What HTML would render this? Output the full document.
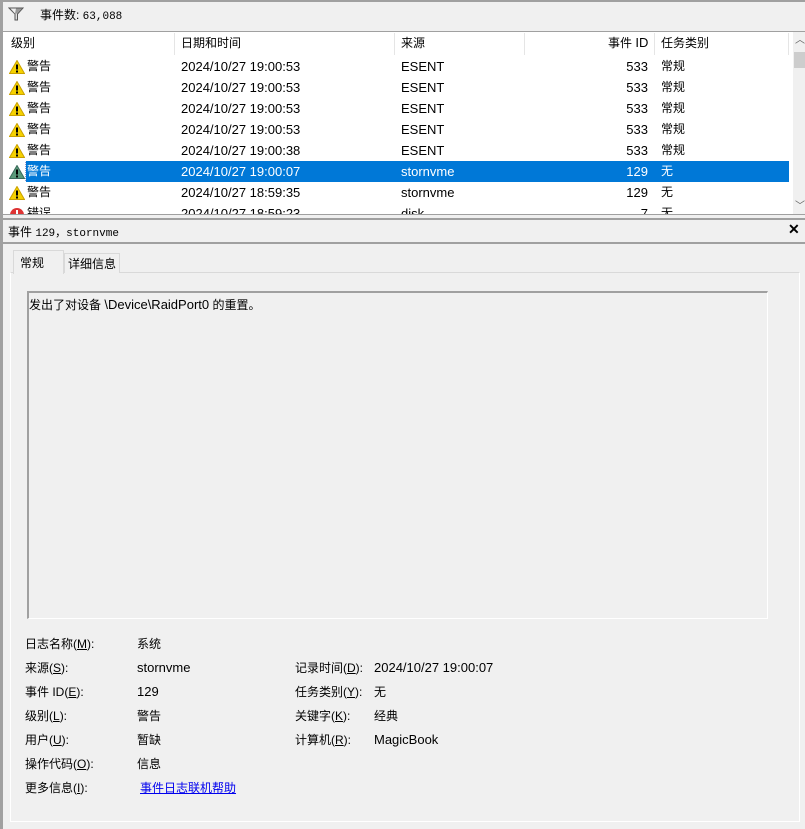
<!DOCTYPE html>
<html><head><meta charset="utf-8"><style>
*{margin:0;padding:0;box-sizing:border-box}
body{width:805px;height:829px;background:#f0f0f0;font-family:"Liberation Sans","Noto Sans CJK SC",sans-serif;font-size:12px;color:#000;position:relative;overflow:hidden}
.a{position:absolute;white-space:nowrap;line-height:16px}
.l{font-size:13px}
.mono{font-family:"Liberation Mono","Noto Sans CJK SC",monospace;font-size:11px}
.row{position:absolute;left:4px;width:785px;height:21px;line-height:21px;overflow:hidden}
.row span{position:absolute}
.sel{background:#0078d7;color:#fff}
.w{left:5px;top:4px;width:16px;height:14px}
u{text-decoration:underline}
</style></head><body>
<div class="a" style="left:0;top:0;width:805px;height:2px;background:#a0a0a0"></div>
<div class="a" style="left:0;top:0;width:3px;height:829px;background:#a0a0a0"></div>
<svg class="a" style="left:8px;top:6px" width="16" height="16" viewBox="0 0 16 16"><path d="M1 2H15L9.5 8V14H7V8Z" fill="#ddd" stroke="#555" stroke-width="1"/><path d="M2.5 2.5H14L9 7.5H7Z" fill="#999"/><path d="M2.5 2.5H8L7 7.5Z" fill="#eee"/></svg>
<div class="a" style="left:40px;top:7px;font-size:12px">事件数: <span class="mono">63,088</span></div>
<div class="a" style="left:3px;top:31px;width:802px;height:184px;background:#fff;border-top:1px solid #a0a0a0"></div>
<div class="a" style="left:174px;top:33px;width:1px;height:22px;background:#e5e5e5"></div>
<div class="a" style="left:394px;top:33px;width:1px;height:22px;background:#e5e5e5"></div>
<div class="a" style="left:524px;top:33px;width:1px;height:22px;background:#e5e5e5"></div>
<div class="a" style="left:654px;top:33px;width:1px;height:22px;background:#e5e5e5"></div>
<div class="a" style="left:788px;top:33px;width:1px;height:22px;background:#e5e5e5"></div>
<div class="a" style="left:11px;top:35px">级别</div>
<div class="a" style="left:181px;top:35px">日期和时间</div>
<div class="a" style="left:401px;top:35px">来源</div>
<div class="a" style="left:608px;top:35px">事件 <span class="l">ID</span></div>
<div class="a" style="left:661px;top:35px">任务类别</div>
<div class="a" style="left:793px;top:32px;width:12px;height:182px;background:#f0f0f0"></div>
<div class="a" style="left:794px;top:52px;width:11px;height:16px;background:#cdcdcd"></div>
<div class="a" style="left:795px;top:33px;font-size:10px;color:#606060">︿</div>
<div class="a" style="left:795px;top:199px;font-size:10px;color:#606060">﹀</div>
<div id="rows"></div>
<div class="a" style="left:3px;top:214px;width:802px;height:1px;background:#a0a0a0"></div>
<div class="a" style="left:3px;top:218px;width:802px;height:2px;background:#a0a0a0"></div>
<div class="a" style="left:8px;top:224px">事件 <span class="mono">129，stornvme</span></div>
<div class="a" style="left:788px;top:221px;font-size:14px;font-weight:bold">✕</div>
<div class="a" style="left:3px;top:242px;width:802px;height:2px;background:#a0a0a0"></div>
<div class="a" style="left:10px;top:272px;width:790px;height:550px;border:1px solid #fff;border-top:1px solid #d9d9d9"></div>
<div class="a" style="left:13px;top:250px;width:51px;height:24px;background:#f0f0f0;border:1px solid #d9d9d9;border-bottom:none;padding:4px 6px">常规</div>
<div class="a" style="left:64px;top:253px;width:56px;height:20px;background:#f0f0f0;border:1px solid #d9d9d9;border-bottom:none;padding:2px 3px">详细信息</div>
<div class="a" style="left:27px;top:291px;width:741px;height:328px;border-top:2px solid #a0a0a0;border-left:2px solid #a0a0a0;border-right:1px solid #fff;border-bottom:1px solid #fff"></div>
<div class="a" style="left:29px;top:297px">发出了对设备 <span class="l">\Device\RaidPort0</span> 的重置。</div>
<div class="a" style="left:25px;top:636px">日志名称(<u>M</u>):</div><div class="a" style="left:137px;top:636px">系统</div>
<div class="a" style="left:25px;top:660px">来源(<u>S</u>):</div><div class="a l" style="left:137px;top:660px">stornvme</div>
<div class="a" style="left:295px;top:660px">记录时间(<u>D</u>):</div><div class="a l" style="left:374px;top:660px">2024/10/27 19:00:07</div>
<div class="a" style="left:25px;top:684px">事件 ID(<u>E</u>):</div><div class="a l" style="left:137px;top:684px">129</div>
<div class="a" style="left:295px;top:684px">任务类别(<u>Y</u>):</div><div class="a" style="left:374px;top:684px">无</div>
<div class="a" style="left:25px;top:708px">级别(<u>L</u>):</div><div class="a" style="left:137px;top:708px">警告</div>
<div class="a" style="left:295px;top:708px">关键字(<u>K</u>):</div><div class="a" style="left:374px;top:708px">经典</div>
<div class="a" style="left:25px;top:732px">用户(<u>U</u>):</div><div class="a" style="left:137px;top:732px">暂缺</div>
<div class="a" style="left:295px;top:732px">计算机(<u>R</u>):</div><div class="a l" style="left:374px;top:732px">MagicBook</div>
<div class="a" style="left:25px;top:756px">操作代码(<u>O</u>):</div><div class="a" style="left:137px;top:756px">信息</div>
<div class="a" style="left:25px;top:780px">更多信息(<u>I</u>):</div><div class="a" style="left:140px;top:780px;color:#0000ee;text-decoration:underline">事件日志联机帮助</div>
<script>
var d=[["警告","2024/10/27 19:00:53","ESENT","533","常规"],["警告","2024/10/27 19:00:53","ESENT","533","常规"],["警告","2024/10/27 19:00:53","ESENT","533","常规"],["警告","2024/10/27 19:00:53","ESENT","533","常规"],["警告","2024/10/27 19:00:38","ESENT","533","常规"],["警告","2024/10/27 19:00:07","stornvme","129","无"],["警告","2024/10/27 18:59:35","stornvme","129","无"],["错误","2024/10/27 18:59:23","disk","7","无"]];
var h="";d.forEach(function(r,i){var t=56+i*21;var sel=i==5;var c=sel?'color:#fff;':'';
var ic=r[0]=="错误"?'<svg class="a w" viewBox="0 0 16 14"><circle cx="8" cy="8" r="7" fill="#d33"/><rect x="7" y="3" width="2" height="6" fill="#fff"/></svg>':'<svg class="a w" viewBox="0 0 16 14"><path d="M8 0.5L15.5 13.5H0.5Z" fill="'+(sel?'#5a9a7a':'#f5d100')+'" stroke="'+(sel?'#3a6a5a':'#c9a000')+'"/><rect x="7" y="4.5" width="2" height="5" fill="#000"/><rect x="7" y="10.5" width="2" height="2" fill="#000"/></svg>';
h+='<div class="row" style="top:'+t+'px;height:'+(i==7?'158px':'21px')+'">'+(sel?'<div class="a sel" style="left:22px;top:0;width:763px;height:21px;outline:1px dotted #99c"></div>':'')+ic+'<span style="left:23px;'+c+'">'+r[0]+'</span><span class="l" style="left:177px;'+c+'">'+r[1]+'</span><span class="l" style="left:397px;'+c+'">'+r[2]+'</span><span class="l" style="right:141px;'+c+'">'+r[3]+'</span><span style="left:657px;'+c+'">'+r[4]+'</span></div>';});
document.getElementById("rows").innerHTML=h;
document.querySelectorAll(".row")[7].style.height="11px";
</script>
</body></html>
